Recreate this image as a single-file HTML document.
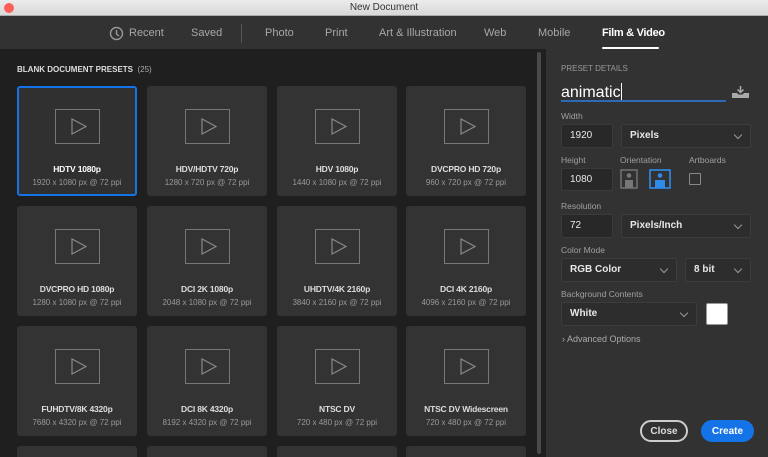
<!DOCTYPE html>
<html><head><style>
*{margin:0;padding:0;box-sizing:border-box}
html,body{width:768px;height:457px;overflow:hidden}
body{background:#1f1f1f;font-family:"Liberation Sans",sans-serif}
#w{position:relative;width:768px;height:457px;overflow:hidden}
.a{position:absolute}
.title{left:0;top:0;width:768px;height:16px;background:linear-gradient(#ececec,#d8d8d8);color:#333;font-size:10px;text-align:center;line-height:16px;border-bottom:1px solid #aaa}
.dot{left:4px;top:3px;width:10px;height:10px;border-radius:50%;background:#fc5f57}
.tabs{left:0;top:16px;width:768px;height:33px;background:#323232}
.tab{top:27px;font-size:11px;color:#a8a8a8}
.card{width:120px;height:110px;background:#333;border-radius:3px}
.card .ic{position:absolute;left:38px;top:23px;width:45px;height:35px;border:1px solid #777}
.card .t{position:absolute;left:0;width:100%;top:78px;text-align:center;font-size:8.5px;color:#ddd;font-weight:bold;letter-spacing:-.2px}
.card .s{position:absolute;left:0;width:100%;top:92px;text-align:center;font-size:8px;color:#999}
.lbl{font-size:8.5px;color:#a0a0a0}
.box{background:#282828;border:1px solid #3a3a3a;border-radius:2px;color:#e8e8e8;font-size:10px;padding-left:8px;line-height:22px}
.sel{background:#2d2d2d;border:1px solid #3c3c3c;border-radius:2px;color:#e8e8e8;font-size:10px;padding-left:8px;line-height:22px;font-weight:bold}
.chev{position:absolute;right:9px;top:7px;width:6px;height:6px;border-right:1.3px solid #999;border-bottom:1.3px solid #999;transform:rotate(45deg)}
</style></head><body><div id="w">
<div class="a title">New Document</div>
<div class="a dot"></div>
<div class="a tabs"></div>
<svg class="a" style="left:109px;top:26px" width="15" height="15" viewBox="0 0 15 15"><circle cx="7.5" cy="7.5" r="6" fill="none" stroke="#999" stroke-width="1.4"/><path d="M7.5 4v4l2.5 2" fill="none" stroke="#999" stroke-width="1.4"/></svg>
<div class="a tab" style="left:129px">Recent</div>
<div class="a tab" style="left:191px">Saved</div>
<div class="a" style="left:241px;top:24px;width:1px;height:19px;background:#555"></div>
<div class="a tab" style="left:265px">Photo</div>
<div class="a tab" style="left:325px">Print</div>
<div class="a tab" style="left:379px">Art &amp; Illustration</div>
<div class="a tab" style="left:484px">Web</div>
<div class="a tab" style="left:538px">Mobile</div>
<div class="a tab" style="left:602px;color:#fff;font-weight:bold;letter-spacing:-.3px">Film &amp; Video</div>
<div class="a" style="left:602px;top:47px;width:57px;height:2px;background:#fff;border-radius:1px"></div>

<div class="a" style="left:17px;top:65px;font-size:8px;color:#ddd;font-weight:bold">BLANK DOCUMENT PRESETS <span style="font-weight:normal;color:#aaa">&nbsp;(25)</span></div>

<div class="a card" style="left:17px;top:86px;border:2px solid #1473e6;background:#303030"><div class="ic" style="left:36px;top:21px"><svg width="43" height="33"><path d="M16 9v15l14-7.5z" fill="none" stroke="#888" stroke-width="1.2"/></svg></div><div class="t" style="top:76px;color:#fff">HDTV 1080p</div><div class="s" style="top:90px">1920 x 1080 px @ 72 ppi</div></div>
<div class="a card" style="left:147px;top:86px"><div class="ic"><svg width="43" height="33"><path d="M16 9v15l14-7.5z" fill="none" stroke="#888" stroke-width="1.2"/></svg></div><div class="t">HDV/HDTV 720p</div><div class="s">1280 x 720 px @ 72 ppi</div></div>
<div class="a card" style="left:277px;top:86px"><div class="ic"><svg width="43" height="33"><path d="M16 9v15l14-7.5z" fill="none" stroke="#888" stroke-width="1.2"/></svg></div><div class="t">HDV 1080p</div><div class="s">1440 x 1080 px @ 72 ppi</div></div>
<div class="a card" style="left:406px;top:86px"><div class="ic"><svg width="43" height="33"><path d="M16 9v15l14-7.5z" fill="none" stroke="#888" stroke-width="1.2"/></svg></div><div class="t">DVCPRO HD 720p</div><div class="s">960 x 720 px @ 72 ppi</div></div>

<div class="a card" style="left:17px;top:206px"><div class="ic"><svg width="43" height="33"><path d="M16 9v15l14-7.5z" fill="none" stroke="#888" stroke-width="1.2"/></svg></div><div class="t">DVCPRO HD 1080p</div><div class="s">1280 x 1080 px @ 72 ppi</div></div>
<div class="a card" style="left:147px;top:206px"><div class="ic"><svg width="43" height="33"><path d="M16 9v15l14-7.5z" fill="none" stroke="#888" stroke-width="1.2"/></svg></div><div class="t">DCI 2K 1080p</div><div class="s">2048 x 1080 px @ 72 ppi</div></div>
<div class="a card" style="left:277px;top:206px"><div class="ic"><svg width="43" height="33"><path d="M16 9v15l14-7.5z" fill="none" stroke="#888" stroke-width="1.2"/></svg></div><div class="t">UHDTV/4K 2160p</div><div class="s">3840 x 2160 px @ 72 ppi</div></div>
<div class="a card" style="left:406px;top:206px"><div class="ic"><svg width="43" height="33"><path d="M16 9v15l14-7.5z" fill="none" stroke="#888" stroke-width="1.2"/></svg></div><div class="t">DCI 4K 2160p</div><div class="s">4096 x 2160 px @ 72 ppi</div></div>

<div class="a card" style="left:17px;top:326px"><div class="ic"><svg width="43" height="33"><path d="M16 9v15l14-7.5z" fill="none" stroke="#888" stroke-width="1.2"/></svg></div><div class="t">FUHDTV/8K 4320p</div><div class="s">7680 x 4320 px @ 72 ppi</div></div>
<div class="a card" style="left:147px;top:326px"><div class="ic"><svg width="43" height="33"><path d="M16 9v15l14-7.5z" fill="none" stroke="#888" stroke-width="1.2"/></svg></div><div class="t">DCI 8K 4320p</div><div class="s">8192 x 4320 px @ 72 ppi</div></div>
<div class="a card" style="left:277px;top:326px"><div class="ic"><svg width="43" height="33"><path d="M16 9v15l14-7.5z" fill="none" stroke="#888" stroke-width="1.2"/></svg></div><div class="t">NTSC DV</div><div class="s">720 x 480 px @ 72 ppi</div></div>
<div class="a card" style="left:406px;top:326px"><div class="ic"><svg width="43" height="33"><path d="M16 9v15l14-7.5z" fill="none" stroke="#888" stroke-width="1.2"/></svg></div><div class="t">NTSC DV Widescreen</div><div class="s">720 x 480 px @ 72 ppi</div></div>

<div class="a card" style="left:17px;top:446px;height:11px;border-radius:3px 3px 0 0"></div>
<div class="a card" style="left:147px;top:446px;height:11px;border-radius:3px 3px 0 0"></div>
<div class="a card" style="left:277px;top:446px;height:11px;border-radius:3px 3px 0 0"></div>
<div class="a card" style="left:406px;top:446px;height:11px;border-radius:3px 3px 0 0"></div>

<div class="a" style="left:537px;top:52px;width:4px;height:402px;background:#4a4a4a;border-radius:2px"></div>
<div class="a" style="left:546px;top:49px;width:222px;height:408px;background:#323232"></div>

<div class="a lbl" style="left:561px;top:64px;font-size:8px;color:#999">PRESET DETAILS</div>
<div class="a" style="left:561px;top:83px;font-size:16px;color:#fff">animatic<span style="display:inline-block;width:1px;height:17px;background:#fff;vertical-align:-3px"></span></div>
<div class="a" style="left:561px;top:100px;width:165px;height:2px;background:#2d6ab5"></div>
<svg class="a" style="left:732px;top:86px" width="17" height="12" viewBox="0 0 17 12"><path d="M8.5 0v6M5.5 3.5l3 3 3-3" fill="none" stroke="#aaa" stroke-width="1.5"/><path d="M0 7h5l1.5 1.5h4L12 7h5v5H0z" fill="#aaa"/></svg>

<div class="a lbl" style="left:561px;top:111px">Width</div>
<div class="a box" style="left:561px;top:124px;width:52px;height:24px">1920</div>
<div class="a sel" style="left:621px;top:124px;width:130px;height:24px">Pixels<i class="chev"></i></div>

<div class="a lbl" style="left:561px;top:155px">Height</div>
<div class="a lbl" style="left:620px;top:155px">Orientation</div>
<div class="a lbl" style="left:689px;top:155px">Artboards</div>
<div class="a box" style="left:561px;top:168px;width:52px;height:23px">1080</div>
<svg class="a" style="left:620px;top:169px" width="18" height="20"><rect x="1" y="1" width="16" height="18" fill="none" stroke="#777" stroke-width="1.4"/><circle cx="9" cy="6.5" r="2.3" fill="#777"/><path d="M5 19v-8h8v8z" fill="#777"/></svg>
<svg class="a" style="left:649px;top:169px" width="22" height="20"><rect x="1" y="1" width="20" height="18" fill="none" stroke="#2d8ceb" stroke-width="1.6"/><circle cx="11" cy="6.5" r="2.3" fill="#2d8ceb"/><path d="M6 19v-8h10v8z" fill="#2d8ceb"/></svg>
<div class="a" style="left:689px;top:173px;width:12px;height:12px;border:1.3px solid #888;border-radius:1px"></div>

<div class="a lbl" style="left:561px;top:201px">Resolution</div>
<div class="a box" style="left:561px;top:214px;width:52px;height:24px">72</div>
<div class="a sel" style="left:621px;top:214px;width:130px;height:24px">Pixels/Inch<i class="chev"></i></div>

<div class="a lbl" style="left:561px;top:245px">Color Mode</div>
<div class="a sel" style="left:561px;top:258px;width:116px;height:24px">RGB Color<i class="chev"></i></div>
<div class="a sel" style="left:685px;top:258px;width:66px;height:24px">8 bit<i class="chev"></i></div>

<div class="a lbl" style="left:561px;top:289px">Background Contents</div>
<div class="a sel" style="left:561px;top:302px;width:136px;height:24px">White<i class="chev"></i></div>
<div class="a" style="left:706px;top:303px;width:22px;height:22px;background:#fff;border-radius:2px;border:1px solid #999"></div>

<div class="a" style="left:562px;top:334px;font-size:9px;color:#aaa">&#x203A; Advanced Options</div>

<div class="a" style="left:640px;top:420px;width:48px;height:22px;border:2px solid #ccc;border-radius:11px;color:#ddd;font-size:10px;font-weight:bold;text-align:center;line-height:19px">Close</div>
<div class="a" style="left:701px;top:420px;width:53px;height:22px;background:#1473e6;border-radius:11px;color:#fff;font-size:10px;font-weight:bold;text-align:center;line-height:23px">Create</div>
</div></body></html>
